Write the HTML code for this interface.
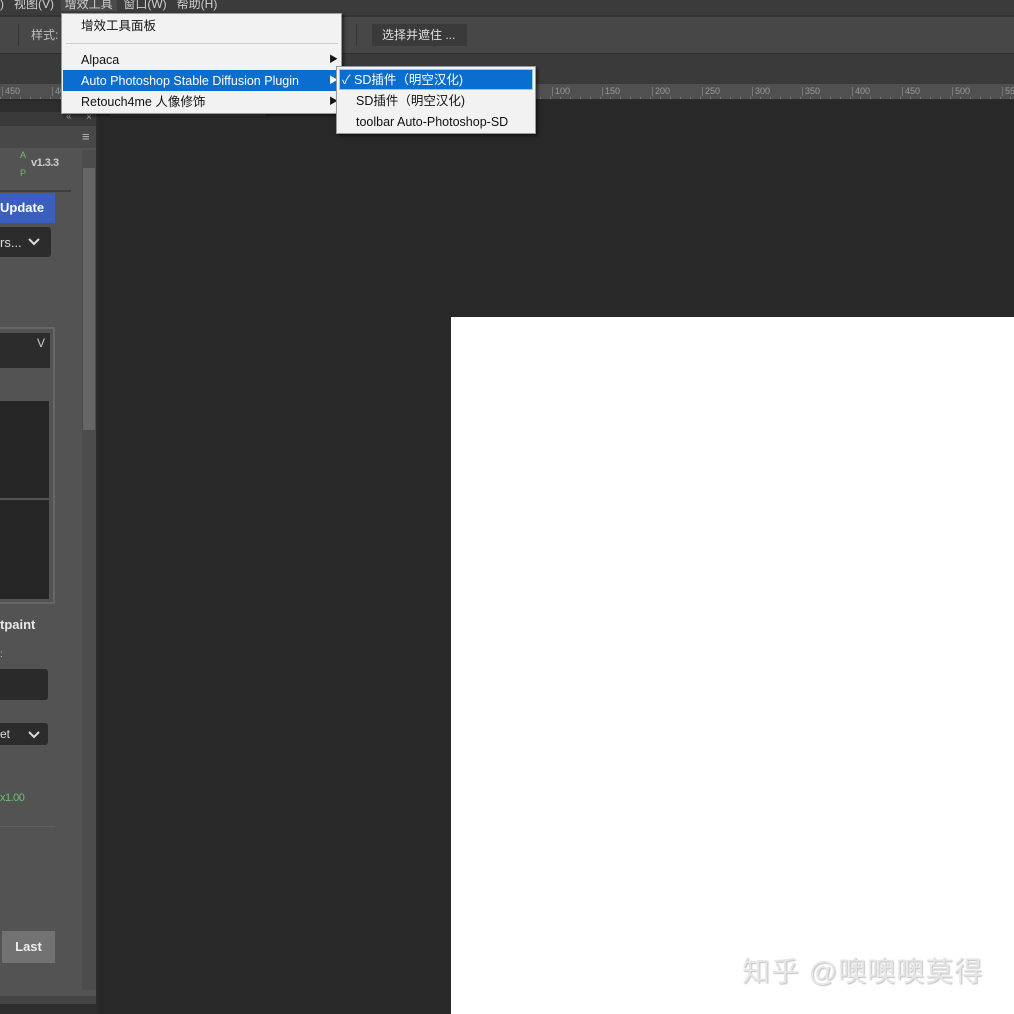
<!DOCTYPE html>
<html><head><meta charset="utf-8"><style>
*{margin:0;padding:0;box-sizing:border-box}
body{width:1014px;height:1014px;overflow:hidden;background:#282828;position:relative;font-family:"Liberation Sans","Noto Sans CJK SC",sans-serif;font-size:12px;line-height:1}
.a{position:absolute}
.m div{line-height:14px}
</style></head><body>
<div class="a" style="left:0;top:0;width:1014px;height:15px;background:#3b3b3b"></div>
<div class="a" style="left:0;top:-3px;color:#cfcfcf;font-size:12px;white-space:nowrap;line-height:14px">)&nbsp;&nbsp; 视图(V)&nbsp;&nbsp;<span style="background:#4a4a4a;padding:0 4px">增效工具</span>&nbsp; 窗口(W)&nbsp;&nbsp; 帮助(H)</div>
<div class="a" style="left:0;top:15px;width:1014px;height:38px;background:#474747;border-top:2px solid #333"></div>
<div class="a" style="left:18px;top:24px;width:1px;height:22px;background:#333"></div>
<div class="a" style="left:31px;top:29px;color:#bdbdbd">样式:</div>
<div class="a" style="left:328px;top:24px;width:14px;height:22px;background:#3e3e3e"></div>
<div class="a" style="left:356px;top:24px;width:1px;height:22px;background:#333"></div>
<div class="a" style="left:372px;top:24px;width:95px;height:22px;background:#3a3a3a;color:#e0e0e0;padding:5px 0 0 10px">选择并遮住 ...</div>
<div class="a" style="left:0;top:53px;width:1014px;height:31px;background:#3a3a3a;border-top:1px solid #2e2e2e"></div>
<div class="a" style="left:0;top:84px;width:1014px;height:16px;background:#505050;border-bottom:1px solid #2a2a2a;background-image:repeating-linear-gradient(90deg,#777 0 1px,transparent 1px 10px);background-size:100% 3px;background-repeat:repeat-x;background-position:0 13px"></div>
<div class="a" style="left:0;top:84px;color:#999;font-size:9px;white-space:nowrap">
<span class="a" style="left:2px;top:3px;border-left:1px solid #777;padding-left:2px">450</span>
<span class="a" style="left:52px;top:3px;border-left:1px solid #777;padding-left:2px">40</span>
<span class="a" style="left:552px;top:3px;border-left:1px solid #777;padding-left:2px">100</span>
<span class="a" style="left:602px;top:3px;border-left:1px solid #777;padding-left:2px">150</span>
<span class="a" style="left:652px;top:3px;border-left:1px solid #777;padding-left:2px">200</span>
<span class="a" style="left:702px;top:3px;border-left:1px solid #777;padding-left:2px">250</span>
<span class="a" style="left:752px;top:3px;border-left:1px solid #777;padding-left:2px">300</span>
<span class="a" style="left:802px;top:3px;border-left:1px solid #777;padding-left:2px">350</span>
<span class="a" style="left:852px;top:3px;border-left:1px solid #777;padding-left:2px">400</span>
<span class="a" style="left:902px;top:3px;border-left:1px solid #777;padding-left:2px">450</span>
<span class="a" style="left:952px;top:3px;border-left:1px solid #777;padding-left:2px">500</span>
<span class="a" style="left:1002px;top:3px;border-left:1px solid #777;padding-left:2px">55</span>
</div>
<div class="a" style="left:110px;top:108px;width:155px;height:8px;border-bottom:2px solid #3a3a3a"></div>
<div class="a" style="left:0;top:101px;width:98px;height:913px;background:#2d2d2d"></div>
<div class="a" style="left:0;top:112px;width:96px;height:14px;background:#3a3a3a;color:#aaa;font-size:10px"><span class="a" style="left:66px;top:0">«</span><span class="a" style="left:86px;top:1px">×</span></div>
<div class="a" style="left:0;top:126px;width:96px;height:22px;background:#484848"><span class="a" style="left:82px;top:4px;color:#bbb;font-size:13px">≡</span></div>
<div class="a" style="left:0;top:148px;width:96px;height:848px;background:#535353"></div>
<div class="a" style="left:82px;top:150px;width:14px;height:840px;background:#4c4c4c"></div>
<div class="a" style="left:83px;top:168px;width:12px;height:262px;background:#666"></div>
<div class="a" style="left:0;top:996px;width:96px;height:8px;background:#454545"></div>
<div class="a" style="left:20px;top:151px;color:#6fbf6f;font-size:9px">A</div>
<div class="a" style="left:20px;top:169px;color:#6fbf6f;font-size:9px">P</div>
<div class="a" style="left:31px;top:158px;color:#ccc;font-size:11px;font-weight:bold;letter-spacing:-0.5px">v1.3.3</div>
<div class="a" style="left:0;top:190px;width:71px;height:2px;background:#3e3e3e"></div>
<div class="a" style="left:0;top:193px;width:55px;height:30px;background:#3b5fc0;color:#fff;font-weight:bold;font-size:13px;padding:8px 0 0 0">Update</div>
<div class="a" style="left:0;top:227px;width:51px;height:30px;background:#2c2c2c;color:#ddd;font-size:13px;padding:9px 0 0 0;border-radius:0 3px 3px 0">rs...</div>
<svg class="a" style="left:28px;top:238px" width="12" height="8"><path d="M1 1L6 6L11 1" stroke="#ddd" stroke-width="2" fill="none"/></svg>
<div class="a" style="left:0;top:327px;width:55px;height:277px;border:2px solid #666;border-left:none"></div>
<div class="a" style="left:0;top:333px;width:50px;height:35px;background:#2c2c2c;color:#ccc;font-size:12px"><span class="a" style="left:37px;top:4px">V</span></div>
<div class="a" style="left:0;top:401px;width:49px;height:97px;background:#262626"></div>
<div class="a" style="left:0;top:500px;width:49px;height:99px;background:#262626"></div>
<div class="a" style="left:0;top:618px;color:#e8e8e8;font-size:13px;font-weight:bold">tpaint</div>
<div class="a" style="left:0;top:650px;color:#ccc;font-size:10px">:</div>
<div class="a" style="left:0;top:669px;width:48px;height:31px;background:#2a2a2a;border-radius:0 3px 3px 0"></div>
<div class="a" style="left:0;top:723px;width:48px;height:22px;background:#2c2c2c;color:#ddd;font-size:12px;padding:5px 0 0 0;border-radius:0 3px 3px 0">et</div>
<svg class="a" style="left:28px;top:731px" width="12" height="8"><path d="M1 1L6 6L11 1" stroke="#ddd" stroke-width="2" fill="none"/></svg>
<div class="a" style="left:0;top:793px;color:#6fbf6f;font-size:11px;letter-spacing:-0.5px">x1.00</div>
<div class="a" style="left:0;top:826px;width:55px;height:1px;background:#5f5f5f"></div>
<div class="a" style="left:2px;top:931px;width:53px;height:32px;background:#727272;color:#eee;font-weight:bold;font-size:13px;text-align:center;padding-top:9px">Last</div>
<div class="a" style="left:451px;top:317px;width:563px;height:697px;background:#fff"></div>
<div class="a" style="left:742px;top:956px;color:#e6e6e6;font-size:28px;line-height:32px;letter-spacing:1px;text-shadow:1px 1px 1px #c4c4c4;white-space:nowrap">知乎 @噢噢噢莫得</div>
<div class="a m" style="left:61px;top:13px;width:281px;height:101px;background:#f2f2f2;border:1px solid #999;box-shadow:2px 2px 3px rgba(0,0,0,.5);color:#111;font-size:12.5px">
<div class="a" style="left:19px;top:5px">增效工具面板</div>
<div class="a" style="left:4px;top:29px;width:272px;height:1px;background:#ccc"></div>
<div class="a" style="left:19px;top:39px">Alpaca</div><div class="a" style="left:267px;top:38px;font-size:9px">▶</div>
<div class="a" style="left:1px;top:56px;width:277px;height:21px;background:#0a6ed1"></div>
<div class="a" style="left:19px;top:60px;color:#fff">Auto Photoshop Stable Diffusion Plugin</div><div class="a" style="left:267px;top:59px;font-size:9px;color:#fff">▶</div>
<div class="a" style="left:19px;top:81px">Retouch4me 人像修饰</div><div class="a" style="left:267px;top:80px;font-size:9px">▶</div>
</div>
<div class="a m" style="left:336px;top:66px;width:200px;height:68px;background:#f2f2f2;border:1px solid #999;box-shadow:2px 2px 3px rgba(0,0,0,.5);color:#111;font-size:12.5px">
<div class="a" style="left:2px;top:2px;width:194px;height:21px;background:#0a6ed1;border:1px solid #9cc"></div>
<div class="a" style="left:5px;top:6px;color:#fff">✓ SD插件（明空汉化)</div>
<div class="a" style="left:19px;top:27px">SD插件（明空汉化)</div>
<div class="a" style="left:19px;top:48px">toolbar Auto-Photoshop-SD</div>
</div>
</body></html>
